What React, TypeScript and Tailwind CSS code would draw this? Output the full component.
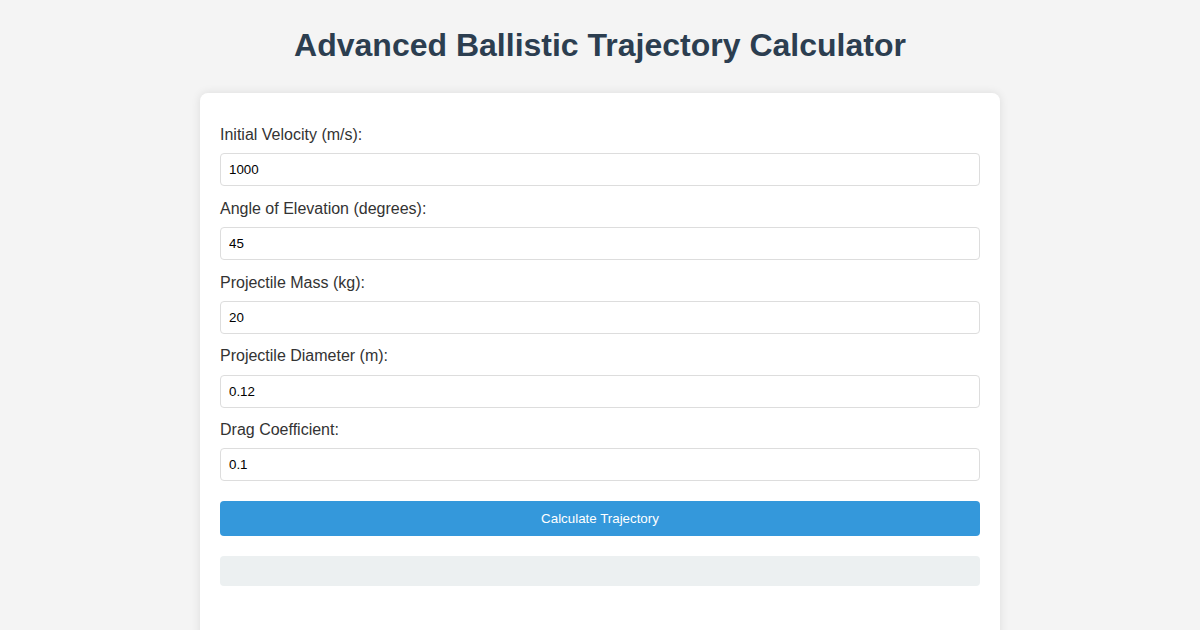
import React from "react";

const fields = [
  { label: "Initial Velocity (m/s):", value: "1000" },
  { label: "Angle of Elevation (degrees):", value: "45" },
  { label: "Projectile Mass (kg):", value: "20" },
  { label: "Projectile Diameter (m):", value: "0.12" },
  { label: "Drag Coefficient:", value: "0.1" },
];

export default function App() {
  return (
    <div
      className="min-h-[630px] bg-[#f4f4f4] pt-[26.5px]"
      style={{ fontFamily: '"Liberation Sans", Arial, sans-serif' }}
    >
      <h1 className="text-center text-[32px] font-bold leading-[37px] text-[#2c3e50]">
        Advanced Ballistic Trajectory Calculator
      </h1>
      <div className="mx-auto mt-[29.5px] w-[800px] rounded-lg bg-white px-5 pt-[33px] pb-[80px] shadow-[0_0_10px_rgba(0,0,0,0.1)]">
        <div className="flex flex-col gap-[13.35px]">
          {fields.map((f) => (
            <div key={f.label} className="flex flex-col">
              <label className="mb-[9px] block text-[16px] leading-[18.4px] text-[#333]">
                {f.label}
              </label>
              <input
                defaultValue={f.value}
                className="h-[33px] w-full rounded border border-[#ddd] px-2 text-[13.33px] text-black outline-none"
                style={{ fontFamily: '"Liberation Sans", Arial, sans-serif' }}
              />
            </div>
          ))}
        </div>
        <button
          className="mt-5 h-[35px] w-full rounded bg-[#3498db] text-[13.33px] text-white"
          style={{ fontFamily: '"Liberation Sans", Arial, sans-serif' }}
        >
          Calculate Trajectory
        </button>
        <div className="mt-5 h-[30px] rounded bg-[#ecf0f1]" />
      </div>
    </div>
  );
}
